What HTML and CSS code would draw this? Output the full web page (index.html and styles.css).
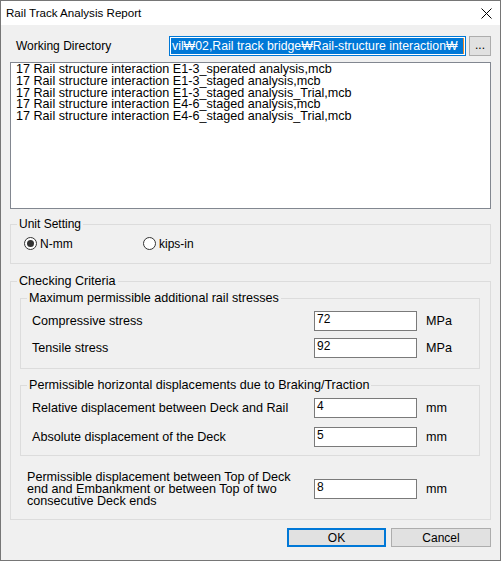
FILE: index.html
```html
<!DOCTYPE html>
<html>
<head>
<meta charset="utf-8">
<link rel="stylesheet" href="styles.css">
</head>
<body>
<div class="window">
  <div class="titlebar">
    <span class="title">Rail Track Analysis Report</span>
    <svg class="close" width="11" height="11" viewBox="0 0 11 11"><path d="M0.5 0.5 L10.5 10.5 M10.5 0.5 L0.5 10.5" stroke="#000" stroke-width="1" fill="none"/></svg>
  </div>
  <div class="content">
    <div class="dir-row">
      <span class="dir-label">Working Directory</span>
      <div class="dir-input"><div class="dir-sel">vil₩02,Rail track bridge₩Rail-structure interaction₩</div></div>
      <div class="btn browse">...</div>
    </div>
    <div class="list">
      <div>17 Rail structure interaction E1-3_sperated analysis,mcb</div>
      <div>17 Rail structure interaction E1-3_staged analysis,mcb</div>
      <div>17 Rail structure interaction E1-3_staged analysis_Trial,mcb</div>
      <div>17 Rail structure interaction E4-6_staged analysis,mcb</div>
      <div>17 Rail structure interaction E4-6_staged analysis_Trial,mcb</div>
    </div>
    <fieldset class="group unit-group">
      <legend>Unit Setting</legend>
      <div class="radios">
        <label class="radio"><span class="dot on"></span>N-mm</label>
        <label class="radio"><span class="dot"></span>kips-in</label>
      </div>
    </fieldset>
    <fieldset class="group criteria">
      <legend>Checking Criteria</legend>
      <fieldset class="group inner g1">
        <legend>Maximum permissible additional rail stresses</legend>
        <div class="row"><span class="lbl">Compressive stress</span><div class="field">72</div><span class="unit">MPa</span></div>
        <div class="row"><span class="lbl">Tensile stress</span><div class="field">92</div><span class="unit">MPa</span></div>
      </fieldset>
      <fieldset class="group inner g2">
        <legend>Permissible horizontal displacements due to Braking/Traction</legend>
        <div class="row"><span class="lbl">Relative displacement between Deck and Rail</span><div class="field">4</div><span class="unit">mm</span></div>
        <div class="row"><span class="lbl">Absolute displacement of the Deck</span><div class="field">5</div><span class="unit">mm</span></div>
      </fieldset>
      <div class="row perm"><span class="lbl multi">Permissible displacement between Top of Deck<br>end and Embankment or between Top of two<br>consecutive Deck ends</span><div class="field">8</div><span class="unit">mm</span></div>
    </fieldset>
    <div class="buttons">
      <div class="btn ok">OK</div>
      <div class="btn cancel">Cancel</div>
    </div>
  </div>
</div>
</body>
</html>
```
FILE: styles.css
```css
html, body {
  margin: 0;
  padding: 0;
  background: #ffffff;
}
.window {
  box-sizing: border-box;
  width: 501px;
  height: 561px;
  border: 1px solid #767676;
  background: #f0f0f0;
  display: flex;
  flex-direction: column;
  font-family: "Liberation Sans", Arial, sans-serif;
  font-size: 12px;
  color: #000;
}
.titlebar {
  height: 24px;
  background: #ffffff;
  display: flex;
  align-items: center;
  justify-content: space-between;
  padding-left: 5px;
  padding-right: 8px;
}
.title {
  font-size: 11.6px;
  line-height: 14px;
}
.close {
  display: block;
}
.content {
  padding: 11px 9px 0 9px;
  display: flex;
  flex-direction: column;
}
.dir-row {
  display: flex;
  align-items: center;
  height: 20px;
}
.dir-label {
  flex: 1;
  padding-left: 6px;
  line-height: 14px;
}
.dir-input {
  box-sizing: border-box;
  width: 297px;
  height: 20px;
  border: 1px solid #0078d7;
  background: #fff;
  padding: 1px;
  margin-right: 3px;
}
.dir-sel {
  box-sizing: border-box;
  height: 16px;
  background: #0078d7;
  color: #fff;
  overflow: hidden;
  white-space: nowrap;
  line-height: 16px;
  padding-left: 1px;
  border-right: 1px solid #e88a2c;
  font-size: 12.3px;
}
.btn {
  box-sizing: border-box;
  background: #e1e1e1;
  border: 1px solid #adadad;
  display: flex;
  align-items: center;
  justify-content: center;
  line-height: 14px;
}
.browse {
  width: 22px;
  height: 20px;
  padding-bottom: 2px;
}
.list {
  box-sizing: border-box;
  margin-top: 6px;
  height: 147px;
  background: #fff;
  border: 1px solid #828790;
  padding: 1px 5px;
  font-size: 12.6px;
  line-height: 11.8px;
  white-space: nowrap;
}
.group {
  margin: 0;
  padding: 0;
  border: 1px solid #dcdcdc;
  min-width: 0;
}
.group > legend {
  margin-left: 6px;
  padding: 0 2px;
  line-height: 14px;
}
.unit-group {
  margin-top: 8px;
}
.radios {
  display: flex;
  padding: 6px 0 13px 13px;
}
.radio {
  display: flex;
  align-items: center;
  height: 13px;
  line-height: 14px;
  gap: 3px;
}
.radio:first-child {
  width: 119px;
}
.dot {
  box-sizing: border-box;
  width: 13px;
  height: 13px;
  border: 1px solid #333;
  border-radius: 50%;
  background: #fff;
  display: flex;
  align-items: center;
  justify-content: center;
}
.dot.on::after {
  content: "";
  width: 7px;
  height: 7px;
  border-radius: 50%;
  background: #333;
}
.criteria {
  margin-top: 10px;
  padding: 3px 10px 12px 9px;
  font-size: 12.6px;
}
.criteria > legend {
  margin-left: -3px;
}
.inner {
  padding-left: 11px;
  display: flex;
  flex-direction: column;
}
.inner > legend {
  margin-left: -5px;
}
.g1 {
  padding-top: 6px;
  padding-bottom: 10px;
  gap: 7px;
}
.g2 {
  margin-top: 9px;
  padding-top: 6px;
  padding-bottom: 8px;
  gap: 9px;
}
.row {
  display: flex;
  align-items: center;
  height: 20px;
}
.lbl {
  flex: 1;
  line-height: 14px;
  white-space: nowrap;
}
.field {
  box-sizing: border-box;
  width: 103px;
  height: 20px;
  border: 1px solid #7a7a7a;
  background: #fff;
  padding: 0 2px;
  line-height: 14px;
  font-size: 12px;
  margin-right: 9px;
}
.unit {
  width: 53px;
  line-height: 14px;
}
.perm {
  margin-top: 15px;
  height: 36px;
  padding-left: 7px;
  padding-right: 1px;
}
.lbl.multi {
  line-height: 12px;
}
.buttons {
  margin-top: 8px;
  display: flex;
  justify-content: flex-end;
  gap: 5px;
}
.ok {
  width: 99px;
  height: 19px;
  border: 2px solid #0078d7;
}
.cancel {
  width: 100px;
  height: 19px;
}
```
